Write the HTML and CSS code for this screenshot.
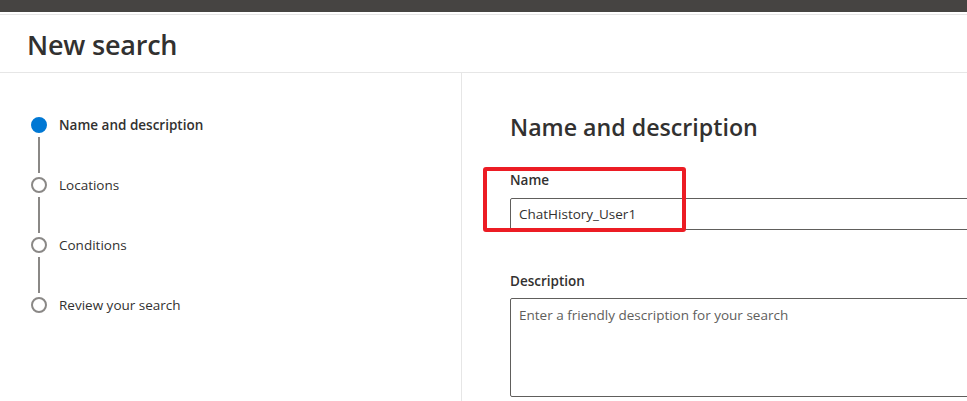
FILE: index.html
```html
<!DOCTYPE html>
<html lang="en">
<head>
<meta charset="utf-8">
<title>New search</title>
<link rel="stylesheet" href="styles.css">
</head>
<body>
<div class="topbar"></div>
<header class="header">
  <h1 class="title">New search</h1>
</header>
<main class="main">
  <nav class="steps">
    <div class="step step-active"><span class="dot dot-filled"></span><span class="step-label">Name and description</span></div>
    <div class="connector"></div>
    <div class="step"><span class="dot"></span><span class="step-label">Locations</span></div>
    <div class="connector"></div>
    <div class="step"><span class="dot"></span><span class="step-label">Conditions</span></div>
    <div class="connector"></div>
    <div class="step"><span class="dot"></span><span class="step-label">Review your search</span></div>
  </nav>
  <section class="content">
    <h2 class="section-title">Name and description</h2>
    <div class="field field-name">
      <label class="field-label" for="name">Name</label>
      <input class="text-input" id="name" type="text" value="ChatHistory_User1">
    </div>
    <div class="field field-desc">
      <label class="field-label" for="desc">Description</label>
      <textarea class="text-area" id="desc" placeholder="Enter a friendly description for your search"></textarea>
    </div>
    <div class="highlight"></div>
  </section>
</main>
</body>
</html>
```
FILE: styles.css
```css
* { box-sizing: border-box; }
html, body { margin: 0; padding: 0; background: #fff; overflow: hidden; }
body {
  font-family: "Open Sans", "Noto Sans", "Liberation Sans", sans-serif;
  color: #323130;
  width: 967px;
  height: 401px;
}
.topbar { height: 12px; background: #464442; }
.header {
  margin-top: 2px;
  border-top: 1px solid #e6e6e6;
  border-bottom: 1px solid #e6e6e6;
  height: 59px;
  display: flex;
  align-items: center;
  padding-left: 27px;
}
.title {
  margin: 0;
  font-size: 27px;
  font-weight: 600;
  letter-spacing: -0.2px;
  color: #323130;
  line-height: 1;
  padding-top: 1px;
}
.main {
  display: grid;
  grid-template-columns: 462px 1fr;
  height: 328px;
}
.steps {
  border-right: 1px solid #e6e6e6;
  padding: 44px 0 0 31px;
  display: flex;
  flex-direction: column;
}
.step {
  display: flex;
  align-items: center;
  gap: 12px;
  height: 16px;
}
.dot {
  width: 16px;
  height: 16px;
  border-radius: 50%;
  border: 2px solid #8a8886;
  flex: none;
}
.dot-filled { background: #0078d4; border-color: #0078d4; }
.step-label { font-size: 13.5px; color: #323130; white-space: nowrap; }
.step-active .step-label { font-weight: 600; }
.connector {
  width: 2px;
  height: 36px;
  margin: 4px 0 4px 7px;
  background: #8a8886;
}
.content {
  position: relative;
  overflow: hidden;
  min-width: 0;
  padding: 39px 0 0 48px;
}
.section-title {
  margin: 0;
  font-size: 23.2px;
  font-weight: 600;
  line-height: 30px;
  color: #323130;
}
.field { display: flex; flex-direction: column; }
.field-name { margin-top: 28px; }
.field-desc { margin-top: 41px; }
.field-label {
  font-size: 13.5px;
  font-weight: 600;
  line-height: 20px;
  color: #323130;
}
.field-name .field-label { margin-bottom: 8px; }
.field-desc .field-label { margin-bottom: 7px; }
.text-input, .text-area {
  font-family: inherit;
  font-size: 13.5px;
  color: #323130;
  border: 1px solid #605e5c;
  border-radius: 2px;
  width: 520px;
  padding: 0 8px;
  outline: none;
  background: #fff;
}
.text-input { height: 32px; }
.text-area {
  height: 99px;
  resize: none;
  padding-top: 6px;
  line-height: 20px;
}
.text-area::placeholder { color: #605e5c; opacity: 1; }
.highlight {
  position: absolute;
  left: 21px;
  top: 94px;
  width: 203px;
  height: 65px;
  border: 4px solid #ec1c24;
  border-radius: 3px;
  pointer-events: none;
}
```
